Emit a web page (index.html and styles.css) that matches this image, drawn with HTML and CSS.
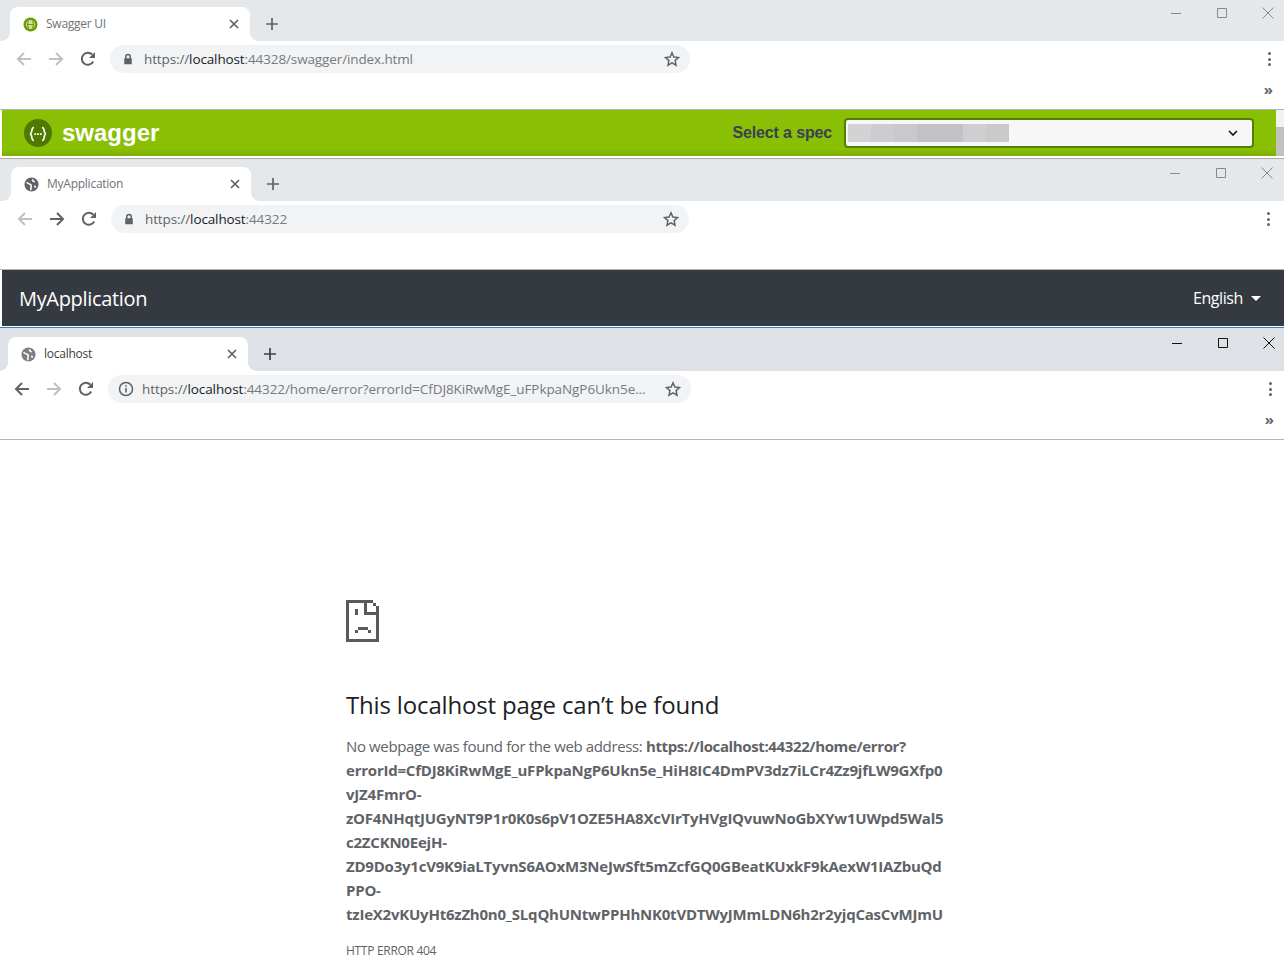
FILE: index.html
```html
<!DOCTYPE html>
<html lang="en">
<head>
<meta charset="utf-8">
<title>Browser windows</title>
<link rel="stylesheet" href="styles.css">
</head>
<body>
<svg class="defs" width="0" height="0" aria-hidden="true">
  <symbol id="back" viewBox="0 0 16 16"><path d="M15 8H2M8 2 2 8l6 6" fill="none" stroke="currentColor" stroke-width="2"/></symbol>
  <symbol id="fwd" viewBox="0 0 16 16"><path d="M1 8h13M8 2l6 6-6 6" fill="none" stroke="currentColor" stroke-width="2"/></symbol>
  <symbol id="reload" viewBox="0 0 16 16"><path d="M13.200 10.500A6 6 0 1 1 12.300 3.700" fill="none" stroke="currentColor" stroke-width="2"/><path d="M15 1v6H9z" fill="currentColor"/></symbol>
  <symbol id="lock" viewBox="0 0 16 16"><path d="M4 7V5a4 4 0 0 1 8 0v2h1v8H3V7zm2 0h4V5a2 2 0 0 0-4 0z" fill="currentColor"/></symbol>
  <symbol id="star" viewBox="0 0 16 16"><path d="m8 1.800 1.900 4.200 4.600.5-3.400 3.100.9 4.600L8 11.900l-4 2.300.9-4.600-3.400-3.100 4.600-.5z" fill="none" stroke="currentColor" stroke-width="1.500"/></symbol>
  <symbol id="close" viewBox="0 0 10 10"><path d="m1 1 8 8M9 1 1 9" fill="none" stroke="currentColor" stroke-width="1.700"/></symbol>
  <symbol id="plus" viewBox="0 0 12 12"><path d="M6 0v12M0 6h12" fill="none" stroke="currentColor" stroke-width="1.700"/></symbol>
  <symbol id="globe" viewBox="0 0 16 16"><circle cx="8" cy="8" r="7.500" fill="currentColor"/><path d="M2.800 5.500C4.500 8 6.500 7 7.500 8.500S6.500 11 7.500 14M9.500 2.500C8.500 4 10 5 11.500 5M11 9.500l1.500 1.500" fill="none" stroke="#fff" stroke-width="1.700"/></symbol>
  <symbol id="info" viewBox="0 0 16 16"><circle cx="8" cy="8" r="6.500" fill="none" stroke="currentColor" stroke-width="1.500"/><path d="M7.200 7h1.600v4.600H7.200zM7.200 4.200h1.600v1.600H7.200z" fill="currentColor"/></symbol>
  <symbol id="wmin" viewBox="0 0 10 10"><path d="M0 5.500h10" stroke="currentColor" fill="none"/></symbol>
  <symbol id="wmax" viewBox="0 0 10 10"><path d="M.5.500h9v9h-9z" stroke="currentColor" fill="none"/></symbol>
  <symbol id="wclose" viewBox="0 0 12 12"><path d="m.5.500 11 11M11.500.500l-11 11" stroke="currentColor" fill="none"/></symbol>
</svg>

<section class="window window-a">
  <div class="strip">
    <div class="tab">
      <svg class="favicon" viewBox="0 0 16 16"><circle cx="8" cy="8" r="7.500" fill="#6b9c00"/><circle cx="8" cy="8" r="4.800" fill="#cfe0a0"/><path d="M6 4C4.500 6 4.500 10 6 12M10 4c1.500 2 1.500 6 0 8M5 8h6" fill="none" stroke="#6b9c00" stroke-width="1.200"/></svg>
      <span class="tab-title">Swagger UI</span>
      <svg class="tab-close"><use href="#close"/></svg>
    </div>
    <svg class="new-tab"><use href="#plus"/></svg>
    <div class="controls">
      <svg class="ctl-min"><use href="#wmin"/></svg>
      <svg class="ctl-max"><use href="#wmax"/></svg>
      <svg class="ctl-close"><use href="#wclose"/></svg>
    </div>
  </div>
  <div class="toolbar">
    <svg class="nav-icon off"><use href="#back"/></svg>
    <svg class="nav-icon off"><use href="#fwd"/></svg>
    <svg class="nav-icon"><use href="#reload"/></svg>
    <div class="omnibox">
      <svg class="site-icon"><use href="#lock"/></svg>
      <span class="url"><span class="url-g">https://</span><span class="url-d">localhost</span><span class="url-l">:44328/swagger/index.html</span></span>
      <svg class="star"><use href="#star"/></svg>
    </div>
    <div class="menu-dots"><i></i><i></i><i></i></div>
  </div>
  <div class="bookmarks"><span class="more">»</span></div>
  <header class="swagger">
    <div class="swagger-logo">
      <svg class="logo-mark" viewBox="0 0 28 28"><circle cx="14" cy="14" r="14" fill="#4f7a00"/><path d="M10 8.500C6.500 8.500 9 14.500 6 15 9 15.500 6.500 21.500 10 21.500M18 8.500c3.500 0 1 6 4 6.500-3 .5-.5 6.500-4 6.500" fill="none" stroke="#fff" stroke-width="1.700"/><path d="M10.300 14.200h1.800V16h-1.800zM13.100 14.200h1.800V16h-1.800zM15.900 14.200h1.800V16h-1.800z" fill="#fff"/></svg>
      <span class="logo-text">swagger</span>
    </div>
    <label class="spec-label">Select a spec</label>
    <div class="spec-select">
      <div class="blur">
        <i class="b1"></i><i class="b2"></i><i class="b3"></i><i class="b4"></i><i class="b5"></i><i class="b6"></i>
      </div>
      <svg class="chevron" viewBox="0 0 10 6"><path d="m1 1 4 4 4-4" fill="none" stroke="#111" stroke-width="1.600"/></svg>
    </div>
    <div class="scrollbar"><span class="scroll-up"></span><span class="scroll-thumb"></span></div>
  </header>
</section>

<section class="window window-b">
  <div class="strip">
    <div class="tab">
      <svg class="favicon globe-dark"><use href="#globe"/></svg>
      <span class="tab-title">MyApplication</span>
      <svg class="tab-close"><use href="#close"/></svg>
    </div>
    <svg class="new-tab"><use href="#plus"/></svg>
    <div class="controls">
      <svg class="ctl-min"><use href="#wmin"/></svg>
      <svg class="ctl-max"><use href="#wmax"/></svg>
      <svg class="ctl-close"><use href="#wclose"/></svg>
    </div>
  </div>
  <div class="toolbar">
    <svg class="nav-icon off"><use href="#back"/></svg>
    <svg class="nav-icon"><use href="#fwd"/></svg>
    <svg class="nav-icon"><use href="#reload"/></svg>
    <div class="omnibox">
      <svg class="site-icon"><use href="#lock"/></svg>
      <span class="url"><span class="url-g">https://</span><span class="url-d">localhost</span><span class="url-l">:44322</span></span>
      <svg class="star"><use href="#star"/></svg>
    </div>
    <div class="menu-dots"><i></i><i></i><i></i></div>
  </div>
  <div class="bookmarks"></div>
  <header class="appbar">
    <span class="brand">MyApplication</span>
    <span class="lang">English<i class="caret"></i></span>
  </header>
</section>

<section class="window window-c">
  <div class="strip">
    <div class="tab">
      <svg class="favicon globe-light"><use href="#globe"/></svg>
      <span class="tab-title dark">localhost</span>
      <svg class="tab-close"><use href="#close"/></svg>
    </div>
    <svg class="new-tab"><use href="#plus"/></svg>
    <div class="controls">
      <svg class="ctl-min"><use href="#wmin"/></svg>
      <svg class="ctl-max"><use href="#wmax"/></svg>
      <svg class="ctl-close"><use href="#wclose"/></svg>
    </div>
  </div>
  <div class="toolbar">
    <svg class="nav-icon"><use href="#back"/></svg>
    <svg class="nav-icon off"><use href="#fwd"/></svg>
    <svg class="nav-icon"><use href="#reload"/></svg>
    <div class="omnibox">
      <svg class="site-icon info"><use href="#info"/></svg>
      <span class="url"><span class="url-g">https://</span><span class="url-d">localhost</span><span class="url-l">:44322/home/error?errorId=CfDJ8KiRwMgE_uFPkpaNgP6Ukn5e...</span></span>
      <svg class="star"><use href="#star"/></svg>
    </div>
    <div class="menu-dots"><i></i><i></i><i></i></div>
  </div>
  <div class="bookmarks"><span class="more">»</span></div>
  <main class="error-page">
    <svg class="sad-file" viewBox="0 0 33 42" shape-rendering="crispEdges" fill="#5a5a5a">
      <path d="M0 0h27v3H3v36h27V9h3v33H0z"/>
      <path d="M18 0h3v12h12v3H18z"/>
      <path d="M27 3h3v3h-3zM30 6h3v3h-3z"/>
      <path d="M9 9h3v6H9zM12 27h10v3H12zM9 30h3v3H9zM22 30h3v3h-3z"/>
    </svg>
    <h1 class="error-title">This localhost page can’t be found</h1>
    <p class="error-text">No webpage was found for the web address: <strong><span class="url-line">https://localhost:44322/home/error?</span><br>errorId=CfDJ8KiRwMgE_uFPkpaNgP6Ukn5e_HiH8IC4DmPV3dz7iLCr4Zz9jfLW9GXfp0<br>vJZ4FmrO-<br>zOF4NHqtJUGyNT9P1r0K0s6pV1OZE5HA8XcVIrTyHVgIQvuwNoGbXYw1UWpd5Wal5<br>c2ZCKN0EejH-<br>ZD9Do3y1cV9K9iaLTyvnS6AOxM3NeJwSft5mZcfGQ0GBeatKUxkF9kAexW1IAZbuQd<br>PPO-<br>tzIeX2vKUyHt6zZh0n0_SLqQhUNtwPPHhNK0tVDTWyJMmLDN6h2r2yjqCasCvMJmU</strong></p>
    <p class="error-code">HTTP ERROR 404</p>
  </main>
</section>
</body>
</html>
```
FILE: styles.css
```css
* { box-sizing: border-box; }
html, body { margin: 0; padding: 0; height: 958px; overflow: hidden; background: #fff; }
body { font-family: "Open Sans", "Noto Sans", sans-serif; color: #202124; }
.defs { display: block; height: 0; }
svg { display: block; flex: none; }

.window { --left: 0px; --right: 0px; --omni: 580px; }
.window-a { --left: 0px; --right: 0px; --omni: 580px; height: 158px; }
.window-b { --left: 1px; --right: 1px; --omni: 578px; height: 170px; border-top: 1px solid #a9abad; border-bottom: 1px solid #2a84cc; }
.window-c { --left: -2px; --right: -1px; --omni: 583px; }

.strip { display: flex; align-items: flex-start; height: 41px; padding: 7px calc(10px + var(--right)) 0 calc(10px + var(--left)); background: #e5e8eb; }
.window-b .strip { height: 42px; padding-top: 8px; }
.window-c .strip { height: 43px; padding-top: 9px; background: #dee1e6; }

.tab { position: relative; display: flex; align-items: center; width: 240px; height: 34px; padding: 0 11px 0 13px; background: #fff; border-radius: 8px 8px 0 0; }
.tab::before, .tab::after { content: ""; position: absolute; bottom: 0; width: 8px; height: 8px; }
.tab::before { left: -8px; background: radial-gradient(circle at 0 0, transparent 7.500px, #fff 8px); }
.tab::after { right: -8px; background: radial-gradient(circle at 100% 0, transparent 7.500px, #fff 8px); }
.favicon { width: 15px; height: 15px; margin-right: 8px; }
.globe-dark { color: #5f6368; }
.globe-light { color: #7c7f83; }
.tab-title { flex: 1; margin-top: -2px; font-size: 12px; letter-spacing: -0.25px; color: #6e7277; white-space: nowrap; }
.tab-title.dark { margin-top: -1px; color: #3c4043; }
.tab-close { width: 10px; height: 10px; color: #5f6368; }
.new-tab { width: 12px; height: 12px; margin: 11px 0 0 16px; color: #5f6368; }
.window-c .new-tab { color: #3c4043; }

.controls { display: flex; align-items: center; margin-left: auto; color: #888; height: 12px; }
.controls svg { width: 10px; height: 10px; }
.ctl-min { margin-right: 36px; }
.ctl-max { margin-right: 35px; }
.controls .ctl-close { width: 12px; height: 12px; }
.window-c .controls { color: #111; }

.toolbar { display: flex; align-items: center; height: 36px; padding: 4px 0 4px calc(16px + var(--left)); background: #fff; color: #5f6368; }
.nav-icon { width: 16px; height: 16px; margin-right: 16px; color: #5f6368; }
.nav-icon.off { color: #bdc1c6; }
.toolbar .nav-icon:nth-of-type(3) { margin-right: 14px; }
.omnibox { display: flex; align-items: center; width: var(--omni); height: 28px; padding: 0 10px 0 12px; background: #f1f3f4; border-radius: 14px; }
.site-icon { width: 12px; height: 12px; margin-right: 10px; color: #5f6368; }
.site-icon.info { width: 16px; height: 16px; margin: 0 8px 0 -2px; }
.url { flex: 1; font-size: 13.500px; letter-spacing: -0.12px; white-space: nowrap; overflow: hidden; }
.url-g { color: #5f6368; }
.url-d { color: #202124; }
.url-l { color: #767a80; }
.window-c .url { letter-spacing: -0.08px; }
.star { width: 16px; height: 16px; color: #5f6368; }
.menu-dots { display: flex; flex-direction: column; gap: 2.500px; margin-left: auto; margin-right: calc(13px + var(--right)); }
.menu-dots i { display: block; width: 3px; height: 3px; border-radius: 50%; background: #5f6368; }

.bookmarks { display: flex; justify-content: flex-end; align-items: center; height: 33px; padding: 0 calc(11px + var(--right)) 7px 0; background: #fff; border-bottom: 1px solid #b5b5b5; }
.more { font-size: 15px; font-weight: 700; line-height: 1; color: #5f6368; }
.window-c .bookmarks { padding-right: 10px; }

.swagger { display: flex; align-items: center; height: 46px; padding-left: 22px; margin-left: 2px; background: linear-gradient(#89bf04 85%, #7fae03); }
.swagger-logo { display: flex; align-items: center; flex: 1; }
.logo-mark { width: 28px; height: 28px; }
.logo-text { margin-left: 10px; font: 700 24px "Liberation Sans", Arial, sans-serif; color: #fff; }
.spec-label { font: 700 16px "Liberation Sans", Arial, sans-serif; letter-spacing: -0.150px; color: #3b4151; }
.spec-select { display: flex; align-items: center; justify-content: space-between; width: 410px; height: 30px; margin: 0 22px 0 12px; padding: 0 14px 0 2px; background: #f7f7f7; border: 2px solid #547f00; border-radius: 4px; }
.blur { display: flex; height: 18px; }
.blur i { display: block; width: 23px; }
.blur .b1 { background: #d3d3d5; }
.blur .b2 { background: #cdcdd1; }
.blur .b3 { background: #c9c9cd; }
.blur .b4 { background: #c2c1c6; width: 46px; }
.blur .b5 { background: #cfcfd1; }
.blur .b6 { background: #cacacd; }
.chevron { width: 10px; height: 6px; }
.scrollbar { display: flex; flex-direction: column; align-items: stretch; width: 8px; height: 100%; background: #f1f1f1; }
.scroll-up { height: 17px; }
.scroll-thumb { flex: 1; background: #c1c1c1; }

.appbar { display: flex; align-items: center; justify-content: space-between; height: 56px; padding: 0 23px 0 17px; margin-left: 2px; background: #343a40; color: #fff; }
.brand { font-size: 20px; letter-spacing: -0.33px; }
.lang { display: flex; align-items: center; font-size: 16px; letter-spacing: -0.4px; }
.caret { display: block; width: 0; height: 0; margin-left: 8px; border: 5px solid transparent; border-top-color: #fff; border-bottom: 0; }

.error-page { padding: 160px 0 0 346px; }
.sad-file { width: 33px; height: 42px; }
.error-title { margin: 48px 0 0; font-size: 24px; font-weight: 400; line-height: 30px; letter-spacing: -0.16px; color: #202124; }
.error-text { margin: 14px 0 0; font-size: 15px; line-height: 24px; letter-spacing: -0.37px; color: #5f6368; white-space: nowrap; }
.error-text strong { letter-spacing: -0.22px; }
.error-text .url-line { letter-spacing: -0.37px; }
.error-code { margin: 17px 0 0; font-size: 12px; line-height: 16px; letter-spacing: -0.3px; color: #5f6368; }
```
